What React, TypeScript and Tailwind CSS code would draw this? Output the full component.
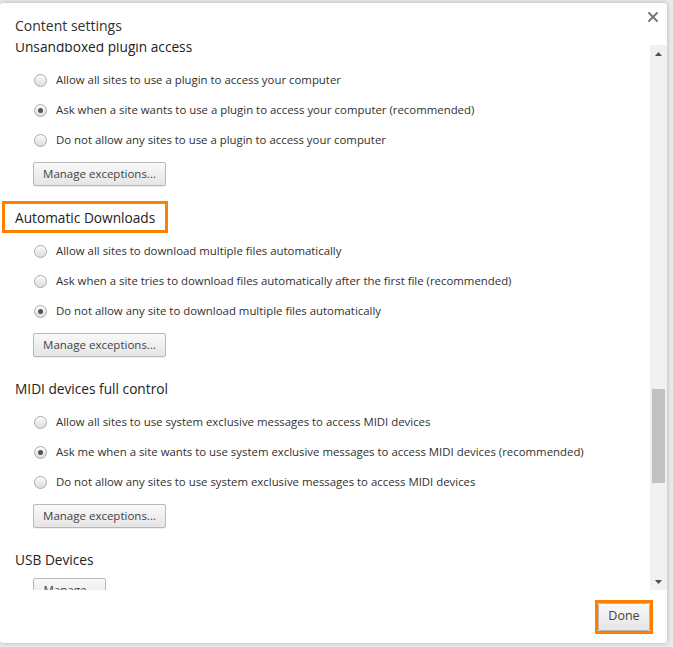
import { X } from 'lucide-react';

type Option = { label: string; checked?: boolean };

type Section = {
    title: string;
    options: Option[];
    highlight?: boolean;
};

const sections: Section[] = [
    {
        title: 'Unsandboxed plugin access',
        options: [
            { label: 'Allow all sites to use a plugin to access your computer' },
            {
                label: 'Ask when a site wants to use a plugin to access your computer (recommended)',
                checked: true,
            },
            { label: 'Do not allow any sites to use a plugin to access your computer' },
        ],
    },
    {
        title: 'Automatic Downloads',
        highlight: true,
        options: [
            { label: 'Allow all sites to download multiple files automatically' },
            {
                label: 'Ask when a site tries to download files automatically after the first file (recommended)',
            },
            { label: 'Do not allow any site to download multiple files automatically', checked: true },
        ],
    },
    {
        title: 'MIDI devices full control',
        options: [
            { label: 'Allow all sites to use system exclusive messages to access MIDI devices' },
            {
                label: 'Ask me when a site wants to use system exclusive messages to access MIDI devices (recommended)',
                checked: true,
            },
            { label: 'Do not allow any sites to use system exclusive messages to access MIDI devices' },
        ],
    },
];

function Radio({ checked }: { checked?: boolean }) {
    return (
        <span className="flex size-[13px] shrink-0 items-center justify-center rounded-full border border-[#aaaaaa] bg-linear-to-b from-[#fafafa] to-[#dedede] shadow-[inset_0_1px_0_white]">
            {checked && <span className="size-[5px] rounded-full bg-[#555555]" />}
        </span>
    );
}

function GreyButton({ children, className = '' }: { children: React.ReactNode; className?: string }) {
    return (
        <button
            className={`flex items-center rounded-[2px] border border-[#b8b8b8] bg-linear-to-b from-[#f9f9f9] to-[#e5e5e5] text-[#444444] shadow-[0_1px_0_rgba(0,0,0,0.06)] ${className}`}
        >
            {children}
        </button>
    );
}

function SettingsSection({ section }: { section: Section }) {
    return (
        <div className="mb-[20px]">
            <div className="relative h-[24px] pl-[15px] text-[13.7px] leading-[24px] text-[#222222]">
                {section.title}
                {section.highlight && (
                    <div className="absolute top-[-5px] left-[2px] h-[32px] w-[166px] border-[3px] border-[#ff8000]" />
                )}
            </div>
            <div className="mt-[6px] pl-[34px]">
                {section.options.map((o) => (
                    <label key={o.label} className="flex h-[30px] items-center gap-[9px] text-[11.4px] text-[#303030]">
                        <Radio checked={o.checked} />
                        <span>{o.label}</span>
                    </label>
                ))}
            </div>
            <div className="mt-[7px] pl-[33px]">
                <GreyButton className="h-[24px] w-[133px] justify-center text-[11.5px]">Manage exceptions...</GreyButton>
            </div>
        </div>
    );
}

export default function App() {
    return (
        <div
            className="h-[647px] w-[673px] overflow-hidden bg-[#ebebeb] pt-[3px]"
            style={{ fontFamily: '"Open Sans", "Noto Sans", Arial, sans-serif' }}
        >
            <div className="relative flex h-[640px] w-[667px] flex-col rounded-[3px] bg-white shadow-[0_0_5px_rgba(0,0,0,0.25)]">
                <div className="h-[40px] pt-[13px] pl-[15px] text-[14px] leading-[20px] text-[#303030]">
                    Content settings
                </div>
                <X className="absolute top-[6px] right-[6px] size-[16px] text-[#777777]" strokeWidth={3} />

                <div className="flex h-[547px]">
                    <div className="flex-1 overflow-hidden">
                        <div className="-mt-[8px]">
                            {sections.map((s) => (
                                <SettingsSection key={s.title} section={s} />
                            ))}
                            <div className="h-[24px] pl-[15px] text-[13.7px] leading-[24px] text-[#222222]">USB Devices</div>
                            <div className="mt-[6px] pl-[33px]">
                                <GreyButton className="h-[24px] w-[73px] justify-center text-[11.5px]">Manage...</GreyButton>
                            </div>
                        </div>
                    </div>

                    <div className="mt-[2px] flex w-[17px] flex-col bg-[#f1f1f1]">
                        <div className="flex h-[17px] items-center justify-center">
                            <svg width="7" height="4" viewBox="0 0 7 4">
                                <path d="M0 4 L3.5 0 L7 4 Z" fill="#505050" />
                            </svg>
                        </div>
                        <div className="mx-[2px] mt-[327px] h-[94px] bg-[#c1c1c1]" />
                        <div className="flex-1" />
                        <div className="flex h-[17px] items-center justify-center">
                            <svg width="7" height="4" viewBox="0 0 7 4">
                                <path d="M0 0 L7 0 L3.5 4 Z" fill="#505050" />
                            </svg>
                        </div>
                    </div>
                </div>

                <div className="flex h-[53px] items-center justify-end pr-[14px]">
                    <div className="border-[3px] border-[#ff8000]">
                        <GreyButton className="h-[28px] w-[52px] justify-center text-[12.5px]">Done</GreyButton>
                    </div>
                </div>
            </div>
        </div>
    );
}
